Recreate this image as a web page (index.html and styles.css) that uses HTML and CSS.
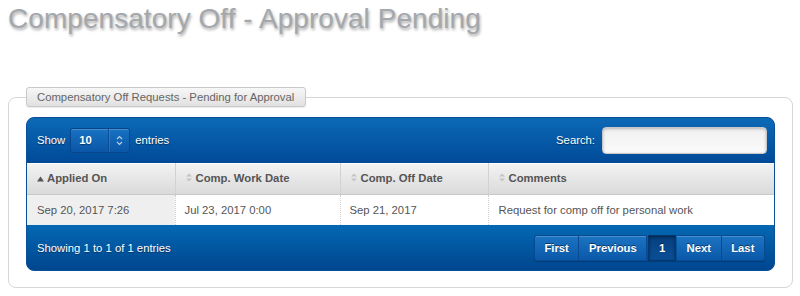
FILE: index.html
```html
<!DOCTYPE html>
<html>
<head>
<meta charset="utf-8">
<link rel="stylesheet" href="styles.css">
</head>
<body>
<h1 class="page-title">Compensatory Off - Approval Pending</h1>
<fieldset class="group">
  <legend class="group-legend">Compensatory Off Requests - Pending for Approval</legend>
  <div class="panel">
    <div class="toolbar">
      <div class="length">
        <span class="lbl">Show</span>
        <div class="select">
          <span class="select-val">10</span>
          <span class="select-arrow">
            <svg width="7" height="11" viewBox="0 0 7 11"><path d="M1 4 L3.5 1.5 L6 4" fill="none" stroke="#b9cde6" stroke-width="1.2"/><path d="M1 7 L3.5 9.5 L6 7" fill="none" stroke="#b9cde6" stroke-width="1.2"/></svg>
          </span>
        </div>
        <span class="lbl">entries</span>
      </div>
      <div class="search">
        <span class="lbl">Search:</span>
        <input class="search-input" type="text">
      </div>
    </div>
    <table class="grid">
      <colgroup>
        <col class="c1"><col class="c2"><col class="c3"><col class="c4">
      </colgroup>
      <thead>
        <tr>
          <th><span class="sort"><svg width="7" height="6" viewBox="0 0 7 6"><path d="M0 5.5 L3.5 0.5 L7 5.5 Z" fill="#555"/></svg></span>Applied On</th>
          <th><span class="sort"><svg width="6" height="9" viewBox="0 0 6 9"><path d="M0 3.6 L3 0.4 L6 3.6 Z M0 5.4 L3 8.6 L6 5.4 Z" fill="#c4c4c4"/></svg></span>Comp. Work Date</th>
          <th><span class="sort"><svg width="6" height="9" viewBox="0 0 6 9"><path d="M0 3.6 L3 0.4 L6 3.6 Z M0 5.4 L3 8.6 L6 5.4 Z" fill="#c4c4c4"/></svg></span>Comp. Off Date</th>
          <th><span class="sort"><svg width="6" height="9" viewBox="0 0 6 9"><path d="M0 3.6 L3 0.4 L6 3.6 Z M0 5.4 L3 8.6 L6 5.4 Z" fill="#c4c4c4"/></svg></span>Comments</th>
        </tr>
      </thead>
      <tbody>
        <tr>
          <td class="sorted">Sep 20, 2017 7:26</td>
          <td>Jul 23, 2017 0:00</td>
          <td>Sep 21, 2017</td>
          <td>Request for comp off for personal work</td>
        </tr>
      </tbody>
    </table>
    <div class="footer">
      <span class="info">Showing 1 to 1 of 1 entries</span>
      <div class="pager">
        <span class="pbtn first">First</span>
        <span class="pbtn">Previous</span>
        <span class="pbtn active">1</span>
        <span class="pbtn">Next</span>
        <span class="pbtn last">Last</span>
      </div>
    </div>
  </div>
</fieldset>
</body>
</html>
```
FILE: styles.css
```css
* { box-sizing: border-box; }
html, body { background: #fff; }
body {
  margin: 0;
  padding: 3px 7px 0 8px;
  font-family: "Liberation Sans", Arial, sans-serif;
  font-size: 11.3px;
  color: #555;
}
.page-title {
  margin: 0;
  font-size: 28px;
  line-height: 32px;
  font-weight: normal;
  color: #a4a8ad;
  text-shadow: 1px 2px 3px rgba(0,0,0,0.35);
  letter-spacing: 0.05px;
}
.group {
  margin: 52px 0 0 0;
  padding: 10px 17px 16px 17px;
  border: 1px solid #d6d6d6;
  border-radius: 8px;
  min-width: 0;
}
.group-legend {
  padding: 0 11px 0 10px;
  margin: 0;
  height: 20px;
  line-height: 18px;
  border: 1px solid #c9c9c9;
  border-radius: 3px;
  background: linear-gradient(#f7f7f7, #e1e1e1);
  color: #666;
  box-shadow: 0 1px 1px rgba(0,0,0,0.08);
}
.panel {
  border: 1px solid #0a4f98;
  border-radius: 8px;
  overflow: hidden;
  background: #0057a3;
}
.toolbar {
  height: 45px;
  display: flex;
  align-items: center;
  justify-content: space-between;
  padding: 0 7px 1px 10px;
  background: linear-gradient(#0c69b6, #004a98);
}
.lbl {
  color: #fff;
  text-shadow: 0 1px 1px rgba(0,0,0,0.45);
}
.length { display: flex; align-items: center; }
.select {
  display: flex;
  align-items: stretch;
  margin: 0 5px 0 5px;
  width: 60px;
  height: 25px;
  border: 1px solid #08458a;
  border-radius: 3px;
  background: linear-gradient(#1872c2, #0a56a7);
  box-shadow: inset 0 1px 0 rgba(255,255,255,0.2);
}
.select-val {
  flex: 1;
  color: #fff;
  font-weight: bold;
  line-height: 23px;
  padding-left: 8px;
  text-shadow: 0 1px 1px rgba(0,0,0,0.4);
}
.select-arrow {
  width: 21px;
  border-left: 1px solid #0a4d95;
  box-shadow: inset 1px 0 0 rgba(255,255,255,0.12);
  display: flex;
  align-items: center;
  justify-content: center;
}
.search { display: flex; align-items: center; }
.search-input {
  margin: 0 0 0 7px;
  width: 165px;
  height: 27px;
  border: 1px solid #c8c8c8;
  border-radius: 4px;
  background: linear-gradient(#f0f0f0, #fafafa);
  box-shadow: inset 0 1px 3px rgba(0,0,0,0.25);
  outline: none;
}
.grid {
  width: 747px;
  table-layout: fixed;
  border-collapse: collapse;
  background: #fff;
}
.c1 { width: 148px; }
.c2 { width: 165px; }
.c3 { width: 148px; }
.c4 { width: 286px; }
.grid th {
  height: 31px;
  padding: 0 0 0 10px;
  text-align: left;
  font-weight: bold;
  color: #555;
  background: linear-gradient(#f3f3f3, #dadada);
  border-bottom: 1px solid #c9c9c9;
  border-left: 1px solid #d2d2d2;
  box-shadow: inset 0 1px 0 #fff;
  white-space: nowrap;
}
.grid th:first-child { border-left: none; }
.sort {
  display: inline-block;
  width: 10px;
  vertical-align: 0px;
}
.grid td {
  height: 31px;
  padding: 0 0 0 9px;
  color: #555;
  border-left: 1px dotted #cfcfcf;
  white-space: nowrap;
}
.grid td:first-child { border-left: none; padding-left: 10px; }
.grid td:last-child { padding-left: 10px; }
.grid td.sorted { background: #efefef; }
.footer {
  height: 45px;
  display: flex;
  align-items: center;
  justify-content: space-between;
  padding: 0 9px 0 10px;
  background: linear-gradient(#0468b2, #00468f);
}
.info {
  color: #fff;
  text-shadow: 0 1px 1px rgba(0,0,0,0.4);
}
.pager {
  display: flex;
  margin-top: 1px;
  border-radius: 3px;
  box-shadow: 0 1px 1px rgba(0,0,0,0.2);
}
.pbtn {
  display: block;
  height: 26px;
  line-height: 24px;
  padding: 0 9.6px;
  font-weight: bold;
  color: #fff;
  text-shadow: 0 -1px 0 rgba(0,0,0,0.5);
  background: linear-gradient(#1c74c2, #0b58a9);
  border: 1px solid #094b92;
  border-left: none;
  box-shadow: inset 0 1px 0 rgba(255,255,255,0.2);
}
.pbtn.first { border-left: 1px solid #094b92; border-radius: 3px 0 0 3px; }
.pbtn.last { border-radius: 0 3px 3px 0; }
.pbtn.active {
  background: linear-gradient(#063f7e, #0a4f98);
  box-shadow: inset 0 1px 3px rgba(0,0,0,0.5);
  border-color: #06386f;
  margin: 0 1px;
  border-left: 1px solid #06386f;
}
```
